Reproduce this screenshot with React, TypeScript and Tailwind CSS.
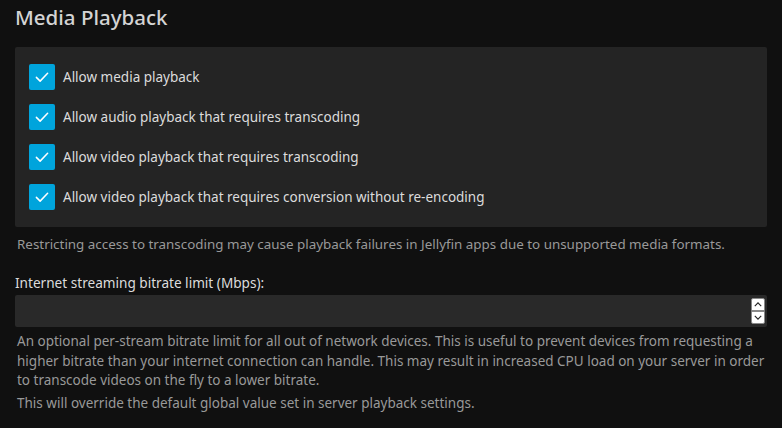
import React from "react";

const options = [
  "Allow media playback",
  "Allow audio playback that requires transcoding",
  "Allow video playback that requires transcoding",
  "Allow video playback that requires conversion without re-encoding",
];

const CheckMark = () => (
  <svg viewBox="0 0 24 24" className="h-[18px] w-[18px]" fill="none">
    <path
      d="M4.5 12.5l5 5L19.5 7"
      stroke="white"
      strokeWidth="2"
      strokeLinecap="round"
      strokeLinejoin="round"
    />
  </svg>
);

const App: React.FC = () => {
  return (
    <div
      className="min-h-[428px] w-[782px] overflow-hidden bg-[#101010] px-[15px] pt-[3px]"
      style={{ fontFamily: '"Noto Sans", "Open Sans", sans-serif' }}
    >
      <h2 className="text-[20.5px] font-medium leading-[28px] text-[#d4d4d4]">
        Media Playback
      </h2>

      <div className="mt-[16px] flex h-[180px] flex-col justify-center gap-[14px] rounded-[2px] bg-[#242424] px-[14px]">
        {options.map((label) => (
          <label key={label} className="flex items-center gap-[8px]">
            <span className="flex h-[26px] w-[26px] items-center justify-center rounded-[2px] bg-[#00a4dc]">
              <CheckMark />
            </span>
            <span className="text-[13.5px] text-[#dcdcdc]">{label}</span>
          </label>
        ))}
      </div>

      <p className="mt-[7px] pl-[2px] text-[13.4px] leading-[20px] text-[#999999]">
        Restricting access to transcoding may cause playback failures in
        Jellyfin apps due to unsupported media formats.
      </p>

      <div className="mt-[19px]">
        <label className="block text-[13.6px] leading-[20px] text-[#dcdcdc]">
          Internet streaming bitrate limit (Mbps):
        </label>
        <div className="mt-[2px] flex h-[32px] items-center justify-end rounded-[2px] bg-[#292929] pr-[2px]">
          <div className="flex flex-col">
            <span className="flex h-[13px] w-[14px] items-center justify-center rounded-t-[2px] border border-[#888] bg-white">
              <svg viewBox="0 0 10 6" className="h-[5px] w-[8px]" fill="none">
                <path d="M1 5l4-4 4 4" stroke="#222" strokeWidth="1.4" />
              </svg>
            </span>
            <span className="flex h-[13px] w-[14px] items-center justify-center rounded-b-[2px] border border-[#888] bg-white">
              <svg viewBox="0 0 10 6" className="h-[5px] w-[8px]" fill="none">
                <path d="M1 1l4 4 4-4" stroke="#222" strokeWidth="1.4" />
              </svg>
            </span>
          </div>
        </div>
        <p className="mt-[5px] whitespace-nowrap pl-[2px] text-[13.5px] leading-[19.5px] text-[#999999]">
          An optional per-stream bitrate limit for all out of network devices.
          This is useful to prevent devices from requesting a
          <br />
          higher bitrate than your internet connection can handle. This may
          result in increased CPU load on your server in order
          <br />
          to transcode videos on the fly to a lower bitrate.
        </p>
        <p className="mt-[3px] pl-[2px] text-[13.5px] leading-[19.5px] text-[#999999]">
          This will override the default global value set in server playback
          settings.
        </p>
      </div>
    </div>
  );
};

export default App;
